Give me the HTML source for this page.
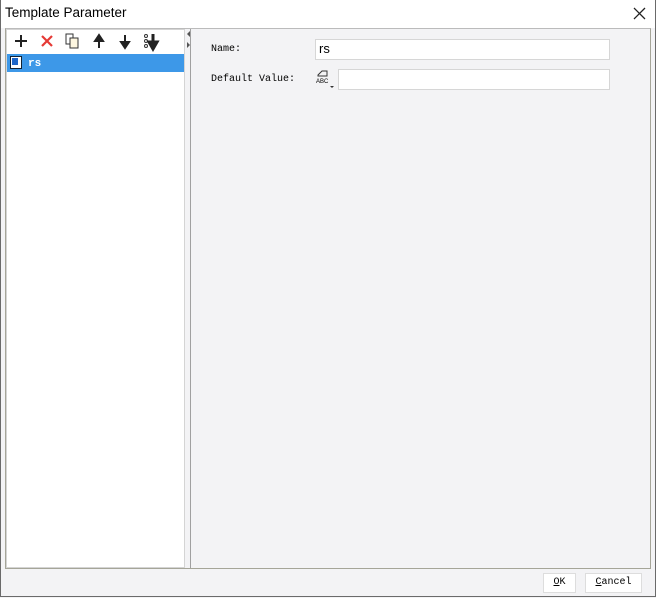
<html><head><style>
body{margin:0;width:656px;height:598px;background:#f3f3f5;font-family:"Liberation Sans",sans-serif;position:relative;overflow:hidden}
.abs{position:absolute}
.mono{font-family:"Liberation Mono","Noto Sans CJK SC",monospace;font-size:10px}
</style></head><body>
<div class="abs" style="left:0;top:0;width:654px;height:596px;border:1px solid #6a6a6a;border-top:none"></div>
<div class="abs" style="left:1px;top:0;width:654px;height:28px;background:#fff"></div>
<div class="abs" style="left:5px;top:5px;font-size:13.5px;color:#000">Template Parameter</div>
<svg class="abs" style="left:633px;top:7px" width="14" height="14"><path d="M1 1L12 12M12 1L1 12" stroke="#222" stroke-width="1.3"/></svg>
<div class="abs" style="left:5px;top:28px;width:644px;height:539px;border:1px solid #a5a598;border-top-color:#bbb;background:#f3f3f5"></div>
<div class="abs" style="left:6px;top:29px;width:177px;height:537px;background:#fff;border:1px solid #d4d4d4"></div>
<div class="abs" style="left:190px;top:29px;width:1px;height:539px;background:#a0a0a0"></div>
<svg class="abs" style="left:186px;top:30px" width="5" height="20"><path d="M4 1L1 4L4 7Z" fill="#555"/><path d="M1 12L4 15L1 18Z" fill="#555"/></svg>
<svg class="abs" style="left:12px;top:32px" width="150" height="20">
<path d="M9 3V15M3 9H15" stroke="#222" stroke-width="2"/>
<path d="M30 4L40 14M40 4L30 14" stroke="#e53935" stroke-width="2.2"/>
<rect x="54" y="2" width="7" height="10" fill="#fff" stroke="#333"/><rect x="58" y="6" width="8" height="10" fill="#fdf6e0" stroke="#333"/>
<path d="M87 16V5M83 9L87 3L91 9Z" stroke="#222" stroke-width="2" fill="#222"/>
<path d="M113 3V13M109 10L113 16L117 10Z" stroke="#222" stroke-width="2" fill="#222"/>
<circle cx="134" cy="4" r="1.5" fill="none" stroke="#333"/><circle cx="134" cy="9" r="1.5" fill="none" stroke="#333"/><circle cx="134" cy="14" r="1.5" fill="none" stroke="#333"/>
<path d="M141 2V11M137 10L141 17L145 10Z" stroke="#222" stroke-width="3" fill="#222"/>
</svg>
<div class="abs" style="left:7px;top:54px;width:177px;height:18px;background:#3d98e8"></div>
<div class="abs" style="left:10px;top:56px;width:10px;height:11px;background:#fff;border:1px solid #123"></div>
<div class="abs" style="left:12px;top:58px;width:6px;height:7px;background:#1e66c8"></div>
<div class="abs mono" style="left:28px;top:58px;color:#fff;font-weight:bold;font-size:11px">rs</div>
<div class="abs mono" style="left:211px;top:44px">Name:</div>
<div class="abs mono" style="left:211px;top:74px">Default Value:</div>
<div class="abs" style="left:315px;top:39px;width:293px;height:19px;background:#fff;border:1px solid #d6d6d6"></div>
<div class="abs" style="left:319px;top:41px;font-size:13px">rs</div>
<div class="abs" style="left:338px;top:69px;width:270px;height:19px;background:#fff;border:1px solid #d6d6d6"></div>
<svg class="abs" style="left:315px;top:69px" width="22" height="22"><path d="M3 6L7 2H12V7H3Z" fill="none" stroke="#333"/><text x="1" y="14" font-size="6" font-family="Liberation Sans">ABC</text><path d="M15 17H19L17 19Z" fill="#333"/></svg>
<div class="abs mono" style="left:543px;top:573px;width:31px;height:18px;background:#fff;border:1px solid #ddd;text-align:center;line-height:18px"><u>O</u>K</div>
<div class="abs mono" style="left:585px;top:573px;width:55px;height:18px;background:#fff;border:1px solid #ddd;text-align:center;line-height:18px"><u>C</u>ancel</div>
</body></html>
